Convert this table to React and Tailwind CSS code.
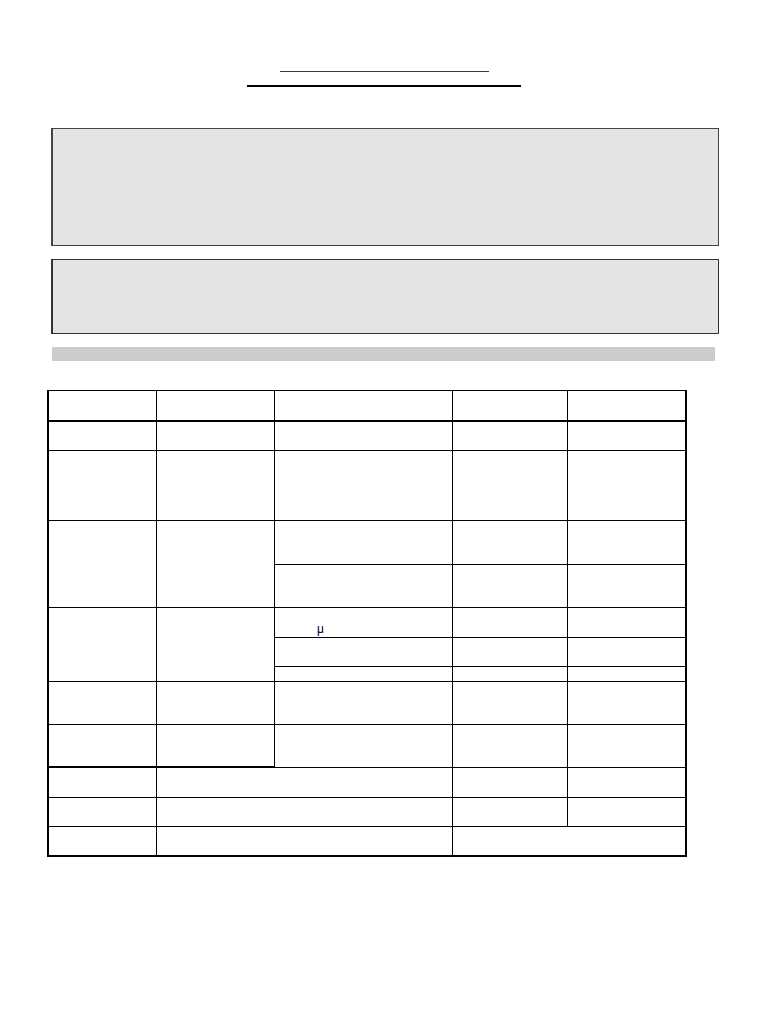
export default function App() {
  const c = "bg-white";
  return (
    <div className="w-[768px] h-[1024px] bg-white relative" style={{ fontFamily: '"Liberation Sans", Arial, sans-serif' }}>
      <div className="pt-[71px]">
        <div className="ml-[280px] w-[209px] h-px bg-[#3a3a3a]" />
        <div className="ml-[247px] mt-[13px] w-[274px] h-[2px] bg-black" />
        <div className="ml-[51px] mt-[41px] w-[668px] h-[118px] bg-[#e4e4e4] border border-l-2 border-[#444]" />
        <div className="ml-[51px] mt-[13px] w-[668px] h-[75px] bg-[#e4e4e4] border border-l-2 border-[#333]" />
        <div className="ml-[52px] mt-[13px] w-[663px] h-[14px] bg-[#cccccc]" />
        <div className="ml-[47px] mt-[29px] w-fit bg-black pl-[2px] pr-[2px] pt-px pb-[2px] grid gap-px grid-cols-[107px_117px_177px_114px_117px] grid-rows-[29px_29px_69px_43px_42px_29px_28px_14px_42px_42px_29px_28px_28px]">
          {/* r1 */}
          <div className={c} /><div className={c} /><div className={c} /><div className={c} /><div className={c} />
          {/* r2 */}
          <div className={`${c} border-t border-black`} /><div className={`${c} border-t border-black`} /><div className={`${c} border-t border-black`} /><div className={`${c} border-t border-black`} /><div className={`${c} border-t border-black`} />
          {/* r3 */}
          <div className={c} /><div className={c} /><div className={c} /><div className={c} /><div className={c} />
          {/* r4-5 */}
          <div className={`${c} row-span-2`} /><div className={`${c} row-span-2`} />
          <div className={c} /><div className={c} /><div className={c} />
          <div className={c} /><div className={c} /><div className={c} />
          {/* r6-8 */}
          <div className={`${c} row-span-3`} /><div className={`${c} row-span-3`} />
          <div className={`${c} flex items-end pl-[42px] pb-[2px] text-[12px] leading-none text-black`}>μ</div><div className={c} /><div className={c} />
          <div className={c} /><div className={c} /><div className={c} />
          <div className={c} /><div className={c} /><div className={c} />
          {/* r9 */}
          <div className={c} /><div className={c} /><div className={c} /><div className={c} /><div className={c} />
          {/* r10 */}
          <div className={`${c} border-b border-black`} /><div className={`${c} border-b border-black`} /><div className={c} /><div className={c} /><div className={c} />
          {/* r11 */}
          <div className={c} /><div className={`${c} col-span-2`} /><div className={c} /><div className={c} />
          {/* r12 */}
          <div className={c} /><div className={`${c} col-span-2`} /><div className={c} /><div className={c} />
          {/* r13 */}
          <div className={c} /><div className={`${c} col-span-2`} /><div className={`${c} col-span-2`} />
        </div>
      </div>
    </div>
  );
}
